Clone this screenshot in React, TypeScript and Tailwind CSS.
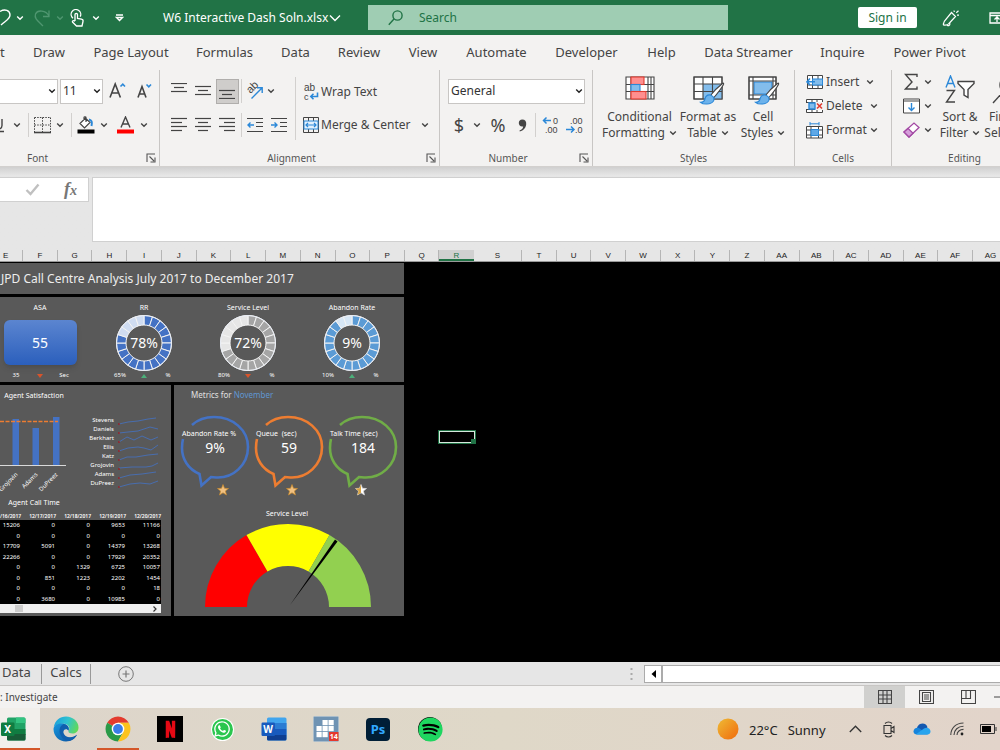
import type { ReactNode } from "react";
import { FaSpotify, FaWhatsapp } from "react-icons/fa";
import { RiNetflixFill } from "react-icons/ri";

const INK = "#444444";
const BLUE = "#2b88d8";

function Chev({ color = INK }: { color?: string }) {
  return (
    <svg width="8" height="6" viewBox="0 0 8 6" fill="none" stroke={color} strokeWidth="1.4" className="shrink-0">
      <path d="M1.2 1.4 L4 4.2 L6.8 1.4" />
    </svg>
  );
}

function IconButton({ label, children, className = "" }: { label: string; children: ReactNode; className?: string }) {
  return (
    <button type="button" aria-label={label} className={"flex items-center justify-center " + className}>
      {children}
    </button>
  );
}

function Rule() {
  return <span className="h-6 w-px justify-self-center bg-[#d2d0ce]" />;
}

function Launcher() {
  return (
    <IconButton label="More settings" className="w-4">
      <svg width="10" height="10" viewBox="0 0 10 10" fill="none" stroke="#555" strokeWidth="1.1">
        <path d="M1 9 V1 H9 M3.5 3.5 L8 8 M9 4.5 V9 H4.5" />
      </svg>
    </IconButton>
  );
}

function Group({ title, width, launcher, children, labelPad = "" }: { title: string; width: string; launcher?: boolean; children: ReactNode; labelPad?: string }) {
  return (
    <section className={"flex shrink-0 flex-col border-r border-[#c8c6c4] " + width}>
      <div className="h-[72px]">{children}</div>
      <div className="mt-2 flex h-4 items-center">
        <span className={"flex-1 text-center text-[10px] leading-4 text-[#555] " + labelPad}>{title}</span>
        {launcher && <Launcher />}
      </div>
    </section>
  );
}

function Combo({ label, value, className }: { label: string; value: string; className: string }) {
  return (
    <span className={"relative flex h-[25px] items-center border border-[#c8c6c4] bg-white " + className}>
      <select aria-label={label} className="h-full w-full appearance-none bg-transparent pl-0.5 text-xs text-[#333]">
        <option>{value}</option>
      </select>
      <span className="pointer-events-none absolute right-[1px]">
        <Chev color="#222" />
      </span>
    </span>
  );
}

function Lines({ rows, y = 2 }: { rows: [number, number][]; y?: number }) {
  return (
    <svg width="16" height="16" viewBox="0 0 16 16" stroke={INK} strokeWidth="1.2">
      {rows.map(([a, b], i) => (
        <line key={i} x1={a} x2={b} y1={y + i * 4 - 0.5} y2={y + i * 4 - 0.5} />
      ))}
    </svg>
  );
}

function Indent({ out }: { out?: boolean }) {
  return (
    <svg width="16" height="16" viewBox="0 0 16 16" fill="none" stroke={INK} strokeWidth="1.2">
      <path d="M0 1.5H16M9 5.5H16M9 9.5H16M0 14.5H16" />
      <path stroke={BLUE} strokeWidth="1.4" d={out ? "M7 8H1M3.5 5.5L1 8L3.5 10.5" : "M0 8H6M3.5 5.5L6 8L3.5 10.5"} />
    </svg>
  );
}

function Brush() {
  return (
    <>
      <path d="M31.5 8.5 C27 12 22 17 19.5 20.5 L22.5 23 C26 19 30 14 32.5 9.5 C33 8 32.3 7.8 31.5 8.5 Z" fill="#fff" stroke={INK} strokeWidth="1.1" />
      <path d="M19.5 20 C16 19.5 14.5 21.5 14 24 C13.5 26 11.5 27.3 9.5 27.3 C12 29.6 20 30 22.5 26 C23.4 24.3 22.8 22.3 21.8 21.4 Z" fill="#6cb2eb" stroke={BLUE} />
    </>
  );
}

function BigButton({ icon, top, bottom, chevron = true }: { icon: ReactNode; top: string; bottom: string; chevron?: boolean }) {
  return (
    <button type="button" className="flex flex-col items-center pt-[5px] text-xs leading-4 whitespace-nowrap text-[#444]">
      <span className="flex h-[34px] justify-center">{icon}</span>
      <span>{top}</span>
      <span className="flex items-center gap-1">
        {bottom}
        {chevron && <Chev />}
      </span>
    </button>
  );
}

const TABS = ["Draw", "Page Layout", "Formulas", "Data", "Review", "View", "Automate", "Developer", "Help", "Data Streamer", "Inquire", "Power Pivot"];

function TitleBar() {
  return (
    <header className="flex h-[35px] items-center bg-[#217346] text-white">
      <div className="grid w-[163px] shrink-0 grid-cols-[12px_16px_28px_8px_26px_12px_34px] items-center justify-items-center">
        <IconButton label="Undo">
          <svg width="12" height="20" viewBox="0 0 12 20" fill="none" stroke="#fff" strokeWidth="1.4">
            <path d="M0 3.5 C5 0.5 10 2.5 10 7 C10 11 6 12.5 1 17" />
          </svg>
        </IconButton>
        <Chev color="#fff" />
        <IconButton label="Redo">
          <svg width="18" height="18" viewBox="0 0 18 18" fill="none" stroke="#4f9670" strokeWidth="1.3">
            <path d="M16 1.5 V7.5 H10 M16 7 C13 1 4.5 0.5 2.5 5 C1 9.5 5 12 10 17" />
          </svg>
        </IconButton>
        <Chev color="#4f9670" />
        <IconButton label="Touch mode">
          <svg width="15" height="18" viewBox="0 0 15 18" fill="none" stroke="#fff" strokeWidth="1.3">
            <path d="M3 9.2 A4.8 4.8 0 1 1 10.2 7.6" />
            <path d="M5 12 V5.5 C5 4 7.5 4 7.5 5.5 V9.5 L11.5 10.2 C13 10.6 13.3 11.3 13 12.5 L12 17 H6.5 L2.5 13 C2 12 3.5 11 5 12.2" />
          </svg>
        </IconButton>
        <Chev color="#fff" />
        <IconButton label="Customize toolbar">
          <svg width="9" height="8" viewBox="0 0 9 8" fill="none" stroke="#fff" strokeWidth="1.3">
            <path d="M1 1H8M1.5 3.5L4.5 6.5L7.5 3.5Z" />
          </svg>
        </IconButton>
      </div>
      <div className="flex w-[205px] shrink-0 items-center gap-px text-xs whitespace-nowrap">
        W6 Interactive Dash Soln.xlsx
        <svg width="12" height="8" viewBox="0 0 12 8" fill="none" stroke="#fff" strokeWidth="1.4">
          <path d="M1 1.5L6 6.5L11 1.5" />
        </svg>
      </div>
      <label className="flex h-[25px] flex-1 items-center gap-4 bg-[#9fcdb3] pl-5">
        <svg width="15" height="16" viewBox="0 0 15 16" fill="none" stroke="#217346" strokeWidth="1.4" className="shrink-0">
          <circle cx="9.5" cy="5.5" r="4.6" />
          <path d="M6.2 8.8L0.8 14.8" />
        </svg>
        <input aria-label="Search" placeholder="Search" className="w-full bg-transparent text-xs text-[#217346] outline-none placeholder:text-[#217346]" />
      </label>
      <div className="flex w-[272px] shrink-0 items-center overflow-hidden pl-[130px]">
        <button type="button" className="h-[21px] w-[59px] shrink-0 rounded-xs bg-white text-xs text-[#217346]">Sign in</button>
        <IconButton label="What's new" className="ml-6 w-5 shrink-0">
          <svg width="18" height="18" viewBox="0 0 18 18" fill="none" stroke="#fff" strokeWidth="1.2">
            <path d="M9.5 3.5 L13.5 7.5 L7 14.5 C5.5 16.5 4 16 1.5 16 C1 15 2 13 2.5 12 Z M5 15.8C5.5 17.3 8.5 17 7.8 14" />
            <path d="M12 1.5L12.3 3M14.3 3.8L16.5 1.8M15 6.2H17" />
          </svg>
        </IconButton>
        <IconButton label="Ribbon display options" className="ml-7 shrink-0">
          <svg width="18" height="12" viewBox="0 0 18 12" fill="none" stroke="#fff" strokeWidth="1.3">
            <path d="M1 1H17V11H1ZM1 3.5H17M8 10V5.5M5.5 7.5L8 5L10.5 7.5" />
          </svg>
        </IconButton>
      </div>
    </header>
  );
}

const L: [number, number][] = [[0, 16], [0, 11], [0, 16], [0, 11]];
const C: [number, number][] = [[0, 16], [3, 13], [0, 16], [3, 13]];
const R: [number, number][] = [[0, 16], [5, 16], [0, 16], [5, 16]];

function FontGroup() {
  return (
    <Group title="Font" width="w-[160px]" launcher labelPad="pr-[68px]">
      <div className="grid h-[42px] grid-cols-[58px_43px_25px_24px] items-center gap-x-[2px]">
        <Combo label="Font" value="" className="border-l-0" />
        <Combo label="Font size" value="11" className="" />
        <IconButton label="Increase font size">
          <svg width="17" height="19" viewBox="0 0 17 19" fill="none" stroke={INK} strokeWidth="1.6">
            <path d="M1 15.5L6.2 2L11.4 15.5M2.8 11H9.6" />
            <path d="M11.5 4.5L13.8 2.2L16 4.5" stroke={BLUE} />
          </svg>
        </IconButton>
        <IconButton label="Decrease font size">
          <svg width="15" height="17" viewBox="0 0 15 17" fill="none" stroke={INK} strokeWidth="1.6">
            <path d="M1 14.5L5 3.5L9 14.5M2.4 11H7.6" />
            <path d="M9.5 1.5L11.8 3.8L14 1.5" stroke={BLUE} />
          </svg>
        </IconButton>
      </div>
      <div className="grid h-[26px] grid-cols-[10px_14px_8px_20px_16px_6px_24px_12px_30px_7px] items-center justify-items-center">
        <IconButton label="Underline" className="justify-self-start">
          <svg width="4" height="16" viewBox="0 0 4 16" fill="none" stroke={INK} strokeWidth="1.4">
            <path d="M2 2V8.5C2 10.5 1.5 11 0 11.8M0 14.5H4" />
          </svg>
        </IconButton>
        <Chev />
        <Rule />
        <IconButton label="Borders">
          <svg width="17" height="17" viewBox="0 0 17 17" fill="none" stroke={INK}>
            <path d="M0.5 0.5H16.5M0.5 0.5V15M16.5 0.5V15M8.5 0.5V15M0.5 8H16.5" strokeDasharray="1.5 1.2" />
            <path d="M0 15.5H17" strokeWidth="1.6" />
          </svg>
        </IconButton>
        <Chev />
        <Rule />
        <IconButton label="Fill colour">
          <svg width="18" height="18" viewBox="0 0 18 18" fill="none" stroke={INK} strokeWidth="1.2">
            <path d="M3 7.5L8.5 2L13 6.5L7.5 12ZM7 4V1.5C7 0.5 9 0.5 9 1.5V6" fill="#fff" />
            <path d="M12 3.5C14.5 4 15.5 6 14.5 10" stroke={BLUE} strokeWidth="2" />
            <rect x="0.5" y="13.5" width="17" height="4" fill="#000" stroke="none" />
          </svg>
        </IconButton>
        <Chev />
        <IconButton label="Font colour">
          <svg width="17" height="18" viewBox="0 0 17 18" fill="none" stroke={INK} strokeWidth="1.4">
            <path d="M4 11.5L8.5 1L13 11.5M5.5 8H11.5" />
            <rect y="13.5" width="17" height="4" fill="#f00" stroke="none" />
          </svg>
        </IconButton>
        <Chev />
      </div>
    </Group>
  );
}

function AlignmentGroup() {
  return (
    <Group title="Alignment" width="w-[280px]" launcher>
      <div className="flex h-full">
        <div className="w-[135px] pl-[7px]">
          <div className="grid h-[42px] grid-cols-[24px_24px_24px_4px_24px_8px] items-center justify-items-center">
            <IconButton label="Top align"><Lines y={1} rows={[[0, 16], [3, 13], [0, 16]]} /></IconButton>
            <IconButton label="Middle align"><Lines y={4} rows={[[0, 16], [3, 13], [0, 16]]} /></IconButton>
            <IconButton label="Bottom align" className="h-[25px] w-[23px] border border-[#b0aeac] bg-[#cfcdcb]">
              <Lines y={8} rows={[[0, 16], [3, 13], [0, 16]]} />
            </IconButton>
            <Rule />
            <IconButton label="Orientation">
              <svg width="20" height="20" viewBox="0 0 20 20" fill="none" stroke={BLUE} strokeWidth="1.4" className="overflow-visible font-['Liberation_Sans',sans-serif]">
                <text transform="translate(5.5 13) rotate(-45)" fontSize="11" fill={INK} stroke="none">ab</text>
                <path d="M6.5 17.5L17 7M12 6.8H17.2V12" />
              </svg>
            </IconButton>
            <Chev />
          </div>
          <div className="grid h-[26px] grid-cols-[24px_24px_24px_4px_24px_24px] items-center justify-items-center">
            <IconButton label="Align left"><Lines rows={L} /></IconButton>
            <IconButton label="Centre"><Lines rows={C} /></IconButton>
            <IconButton label="Align right"><Lines rows={R} /></IconButton>
            <Rule />
            <IconButton label="Decrease indent"><Indent out /></IconButton>
            <IconButton label="Increase indent"><Indent /></IconButton>
          </div>
        </div>
        <div className="mt-[7px] mb-[2px] border-l border-[#d2d0ce] pl-[7px] text-xs whitespace-nowrap text-[#444]">
          <button type="button" className="flex h-[30px] items-center gap-[2px]">
            <svg width="16" height="20" viewBox="0 0 16 20" fill="none" stroke={BLUE} strokeWidth="1.6" className="font-['Liberation_Sans',sans-serif]">
              <text x="1" y="9" fontSize="10" fill={INK} stroke="none">ab</text>
              <text x="1" y="18" fontSize="9" fill={INK} stroke="none">c</text>
              <path d="M14.5 10.5V14.5H8M10.5 11.8L7.8 14.5L10.5 17.2" />
            </svg>
            Wrap Text
          </button>
          <button type="button" className="mt-1 flex h-[28px] items-center gap-[2px]">
            <svg width="16" height="16" viewBox="0 0 16 16" fill="none" stroke={INK}>
              <path d="M0.5 0.5H15.5V15.5H0.5ZM5.5 0.5V4M10.5 0.5V4M5.5 12V15.5M10.5 12V15.5" />
              <rect x="1" y="4" width="14" height="8" fill="#e3f1fc" stroke={BLUE} />
              <path d="M3 8H13M5 6L3 8L5 10M11 6L13 8L11 10" stroke={BLUE} strokeWidth="1.2" />
            </svg>
            Merge &amp; Center
            <span className="pl-2"><Chev /></span>
          </button>
        </div>
      </div>
    </Group>
  );
}

function Decimals({ more }: { more?: boolean }) {
  return (
    <svg width="17" height="20" viewBox="0 0 17 20" fill="none" stroke={BLUE} strokeWidth="1.5" className="font-['Liberation_Sans',sans-serif]">
      <g fill={INK} stroke="none" fontSize="9">
        <text x={more ? 11 : 4} y="9">{more ? "0" : ".00"}</text>
        <text x={more ? 3 : 9} y="18">{more ? ".00" : ".0"}</text>
      </g>
      <path d={more ? "M9 5.5H1.5M4.5 2.5L1.5 5.5L4.5 8.5" : "M0 14.5H8M5 11.5L8 14.5L5 17.5"} />
    </svg>
  );
}

function NumberGroup() {
  return (
    <Group title="Number" width="w-[153px]" launcher>
      <div className="flex h-[42px] items-center pr-[7px] pl-2">
        <Combo label="Number format" value="General" className="w-full" />
      </div>
      <div className="grid h-[26px] grid-cols-[22px_14px_28px_20px_6px_24px_24px] items-center justify-items-center pl-2 text-[#444]">
        <button type="button" className="text-lg leading-5">$</button>
        <Chev />
        <button type="button" className="text-lg leading-5">%</button>
        <IconButton label="Comma style">
          <svg width="9" height="13" viewBox="0 0 9 13" fill={INK}>
            <path d="M4.2 0.5C7 0.5 8.5 2.4 8.2 5.2C7.9 8.8 5.5 11.5 1.8 12.5L1.5 11.6C3.8 10.6 5 9.2 5.2 7.4C2.5 8 0.8 6.2 0.8 4C0.8 2 2.2 0.5 4.2 0.5Z" />
          </svg>
        </IconButton>
        <Rule />
        <IconButton label="Increase decimal"><Decimals more /></IconButton>
        <IconButton label="Decrease decimal"><Decimals /></IconButton>
      </div>
    </Group>
  );
}

function StylesGroup() {
  return (
    <Group title="Styles" width="w-[202px]">
      <div className="grid grid-cols-[73px_64px_46px] pl-[10px]">
        <BigButton
          top="Conditional"
          bottom="Formatting"
          icon={
            <svg width="30" height="26" viewBox="0 0 30 26" fill="none" stroke={INK} strokeWidth="1.1">
              <path d="M1 2H29V24H1ZM1 9.5H29M1 16.5H29M6 2V24M23 2V24M26 2V24" fill="#fff" />
              <rect x="6" y="2" width="13" height="7.5" fill="#ff8f8f" stroke="#e03c31" />
              <rect x="6" y="9.5" width="9" height="7" fill="#83bdec" stroke={BLUE} />
              <rect x="6" y="16.5" width="15" height="7.5" fill="#ff8f8f" stroke="#e03c31" />
            </svg>
          }
        />
        <BigButton
          top="Format as"
          bottom="Table"
          icon={
            <svg width="34" height="31" viewBox="0 0 34 31" fill="none" stroke={INK} strokeWidth="1.1">
              <path d="M3 2H31V24H3Z" fill="#fff" />
              <path d="M12 9H31V24H12Z" fill="#83bdec" stroke="none" />
              <path d="M3 2H31V24H3ZM3 9H31M3 16.5H31M12 2V24M21.5 2V24" />
              <Brush />
            </svg>
          }
        />
        <BigButton
          top="Cell"
          bottom="Styles"
          icon={
            <svg width="34" height="31" viewBox="0 0 34 31" fill="none" stroke={INK} strokeWidth="1.1">
              <path d="M3 2H30V24H3Z" fill="#fff" />
              <path d="M8 7H26V19H8Z" fill="#83bdec" stroke={BLUE} />
              <path d="M3 2H30V24H3ZM3 6H30M3 20H30M7 2V24M27 2V24" />
              <Brush />
            </svg>
          }
        />
      </div>
    </Group>
  );
}

function CellIcon({ kind }: { kind: string }) {
  return (
    <svg width="17" height="17" viewBox="0 0 17 17" fill="none" stroke={INK}>
      {kind === "Insert" && (
        <>
          <path d="M1.5 1.5H16.5V14.5H1.5ZM6.5 1.5V14.5M12 1.5V14.5M1.5 11H16.5" fill="#fff" />
          <rect x="6.5" y="5" width="10" height="6" fill="#83bdec" stroke={BLUE} />
          <path d="M9 7.8H1M4 4.5L1 7.8L4 11" stroke={BLUE} strokeWidth="1.6" />
        </>
      )}
      {kind === "Delete" && (
        <>
          <path d="M0.5 4V1.5H16.5V4M0.5 12V14.5H16.5V12M6 1.5V4M11 1.5V4M6 12V14.5M11 12V14.5M0 4.5H9M0 11.5H9" fill="#fff" />
          <path d="M3 5H9V11H3Z" fill="#83bdec" stroke={BLUE} strokeWidth="1.4" />
          <path d="M11 5.5L16 10.5M16 5.5L11 10.5" stroke="#e03c31" strokeWidth="1.6" />
        </>
      )}
      {kind === "Format" && (
        <>
          <path d="M0.5 4.5H16.5V16H0.5ZM0.5 8H16.5M0.5 13H16.5M5 4.5V16M12.5 4.5V16" fill="#fff" />
          <rect x="5" y="7.5" width="7.5" height="6" fill="#5fa8e6" stroke={BLUE} />
          <path d="M4 0V3.5M13 0V3.5M4 1.8H13" stroke={BLUE} />
        </>
      )}
    </svg>
  );
}

function CellsGroup() {
  return (
    <Group title="Cells" width="w-[97px]">
      <div className="flex flex-col pl-[11px]">
        {["Insert", "Delete", "Format"].map((k) => (
          <button key={k} type="button" className="flex h-6 items-center gap-[3px] text-xs text-[#444]">
            <CellIcon kind={k} />
            {k}
            <span className={k === "Format" ? "" : "pl-1"}><Chev /></span>
          </button>
        ))}
      </div>
    </Group>
  );
}

function EditingGroup() {
  return (
    <Group title="Editing" width="w-[146px]">
      <div className="grid grid-cols-[20px_14px_50px_44px] pl-[9px]">
        <div className="grid">
          <IconButton label="AutoSum" className="h-6">
            <svg width="14" height="18" viewBox="0 0 14 18" fill="none" stroke={INK} strokeWidth="1.4">
              <path d="M13 4V1.5H1.5L8 9L1.5 16H13V13.5" />
            </svg>
          </IconButton>
          <IconButton label="Fill" className="h-6">
            <svg width="17" height="16" viewBox="0 0 17 16" fill="none" stroke={INK}>
              <path d="M0.5 1H16.5V15H0.5ZM0.5 3H16.5" fill="#fff" />
              <path d="M8.5 5V12.5M5.5 9.5L8.5 12.5L11.5 9.5" stroke={BLUE} strokeWidth="1.4" />
            </svg>
          </IconButton>
          <IconButton label="Clear" className="h-6">
            <svg width="17" height="16" viewBox="0 0 17 16" fill="#fff" stroke="#a349a4" strokeWidth="1.3">
              <path d="M1 10L11 1L16 5.5L6 15Z" />
              <path d="M1 10L5 6.4L10 11.2L6 15Z" fill="#d59fda" />
            </svg>
          </IconButton>
        </div>
        <div className="grid h-[72px] items-center justify-items-center">
          <Chev />
          <Chev />
          <Chev />
        </div>
        <BigButton
          top="Sort &"
          bottom="Filter"
          icon={
            <svg width="30" height="30" viewBox="0 0 30 30" fill="none" stroke={INK} strokeWidth="1.4">
              <path d="M1 12.5L5.5 1L10 12.5M2.6 8.5H8.4" stroke={BLUE} />
              <path d="M1.5 15.5H9.5L1.5 27H10" />
              <path d="M13 6.5H29V8.5L23 14.5V22.5L19 20V14.5L13 8.5Z" fill="#fff" />
            </svg>
          }
        />
        <BigButton
          top="Find &"
          bottom="Select"
          icon={
            <svg width="30" height="30" viewBox="0 0 30 30" fill="none" stroke={INK} strokeWidth="1.4">
              <circle cx="17" cy="10" r="9" />
              <path d="M11 17L1 28" />
            </svg>
          }
        />
      </div>
    </Group>
  );
}

function Ribbon() {
  return (
    <div className="overflow-hidden border-b border-[#d2d0ce] bg-[#f3f2f1]">
      <nav className="grid h-[35px] grid-cols-[18px_62px_102px_85px_57px_70px_58px_89px_91px_59px_115px_73px_101px] items-center text-center text-[13px] whitespace-nowrap text-[#444]">
        <button type="button" className="flex justify-self-start">t</button>
        {TABS.map((t) => (
          <button key={t} type="button">{t}</button>
        ))}
      </nav>
      <div className="flex h-24">
        <FontGroup />
        <AlignmentGroup />
        <NumberGroup />
        <StylesGroup />
        <CellsGroup />
        <EditingGroup />
      </div>
    </div>
  );
}

function FormulaBar() {
  return (
    <div className="flex h-[83px] items-start gap-[3px] bg-linear-to-b from-[#d0d0d0] to-[#e6e6e6] to-10% pt-2.5">
      <div className="flex h-[25px] w-[89px] shrink-0 items-center border border-l-0 border-[#d0d0d0] bg-white">
        <IconButton label="Enter" className="ml-[25px]">
          <svg width="15" height="13" viewBox="0 0 15 13" fill="none" stroke="#c0c0c0" strokeWidth="2.4">
            <path d="M1.5 7L5.5 11L13.5 1.5" />
          </svg>
        </IconButton>
        <button type="button" className="ml-6 font-['Liberation_Serif',serif] text-lg leading-5 font-bold text-[#777] italic">
          f<span className="text-sm">x</span>
        </button>
      </div>
      <textarea aria-label="Formula" className="h-[65px] flex-1 resize-none border border-r-0 border-[#d0d0d0] bg-white outline-none" />
    </div>
  );
}

const LEFT_COLS = ["F", "G", "H", "I", "J", "K", "L", "M", "N", "O", "P"];
const RIGHT_COLS = ["T", "U", "V", "W", "X", "Y", "Z", "AA", "AB", "AC", "AD", "AE", "AF"];

function ColumnHeads() {
  const cell = "border-r border-[#b5b5b5] text-center";
  return (
    <div className="flex h-[12px] overflow-hidden border-b border-[#999] bg-[#e6e6e6] font-['Liberation_Sans',sans-serif] text-[8px] leading-3 text-[#222]">
      <span className="w-[23px] shrink-0 border-r border-[#b5b5b5] pl-[3px]">E</span>
      <div className="grid w-[382px] shrink-0 grid-cols-11">
        {LEFT_COLS.map((c) => <span key={c} className={cell}>{c}</span>)}
      </div>
      <span className="w-[34px] shrink-0 border-r border-[#b5b5b5] text-center">Q</span>
      <span className="w-[35px] shrink-0 border-b-2 border-[#217346] bg-[#d0d0d0] text-center text-[#217346]">R</span>
      <span className="w-[48px] shrink-0 border-r border-[#b5b5b5] text-center">S</span>
      <div className="grid w-[451px] shrink-0 grid-cols-13">
        {RIGHT_COLS.map((c) => <span key={c} className={cell}>{c}</span>)}
      </div>
      <span className="w-[35px] shrink-0 text-center">AG</span>
    </div>
  );
}

function polar(cx: number, cy: number, r: number, deg: number): string {
  const a = ((deg - 90) * Math.PI) / 180;
  return (cx + r * Math.cos(a)).toFixed(2) + " " + (cy + r * Math.sin(a)).toFixed(2);
}

function sector(cx: number, cy: number, ro: number, ri: number, from: number, to: number): string {
  return `M${polar(cx, cy, ro, from)}A${ro} ${ro} 0 0 1 ${polar(cx, cy, ro, to)}L${polar(cx, cy, ri, to)}A${ri} ${ri} 0 0 0 ${polar(cx, cy, ri, from)}Z`;
}

function Ring({ filled, color, light }: { filled: number; color: string; light: string }) {
  return (
    <svg width="58" height="58" viewBox="0 0 58 58" className="col-start-1 row-start-1">
      {Array.from({ length: 20 }, (_, i) => (
        <path key={i} d={sector(29, 29, 27.5, 18, i * 18, i * 18 + 18)} fill={i < filled ? color : light} stroke="#f4f4f4" strokeWidth="1" />
      ))}
      <circle cx="29" cy="29" r="27.5" fill="none" stroke="#e8ecf4" />
    </svg>
  );
}

function Kpi({ title, target, unit, up, children }: { title: string; target: string; unit: string; up?: boolean; children: ReactNode }) {
  return (
    <div className="flex flex-col items-center">
      <span className="pt-[5px] text-[7px] leading-3">{title}</span>
      <div className="grid h-[57px] place-items-center text-sm">{children}</div>
      <div className="grid h-[9px] grid-cols-[22px_26px_22px] place-items-center text-[6px] leading-[9px]">
        <span>{target}</span>
        <svg width="6" height="4" viewBox="0 0 6 4" fill={up ? "#4caf7a" : "#d9542b"}>
          <path d={up ? "M0 4L3 0L6 4Z" : "M0 0L3 4L6 0Z"} />
        </svg>
        <span>{unit}</span>
      </div>
    </div>
  );
}

const AGENTS: [string, string][] = [
  ["Stevens", "M1 7L10 5L20 4L30 2L38 1"],
  ["Daniels", "M1 7L10 6L20 5L32 1L40 3"],
  ["Berkhart", "M1 7L9 2L16 5L24 1L33 5L40 2"],
  ["Ellis", "M1 7L10 4L20 3L26 4L33 6L40 1"],
  ["Katz", "M1 7L9 4L18 4L30 2L40 1"],
  ["Grojovin", "M1 6L14 5L28 5L34 4L40 1"],
  ["Adams", "M1 7L12 4L24 3L38 1"],
  ["DuPreez", "M1 7L12 4L22 3L32 4L40 1"],
];

const DATES = ["/16/2017", "12/17/2017", "12/18/2017", "12/19/2017", "12/20/2017"];
const CALLS = [
  [15206, 0, 0, 9653, 11166],
  [0, 0, 0, 0, 0],
  [17709, 5091, 0, 14379, 13268],
  [22266, 0, 0, 17929, 20352],
  [0, 0, 1329, 6725, 10057],
  [0, 851, 1223, 2202, 1454],
  [0, 0, 0, 0, 18],
  [0, 3680, 0, 10985, 0],
];

function AgentPanel() {
  return (
    <section className="w-[171px] bg-[#595959] text-white">
      <h2 className="w-[68px] pt-[5px] text-center text-[7px] leading-3 whitespace-nowrap">Agent Satisfaction</h2>
      <div className="flex h-[94px] pt-3.5">
        <svg width="80" height="80" viewBox="0 0 80 80">
          <g fill="#4472c4">
            <rect x="12.5" y="3" width="6.5" height="46" />
            <rect x="32.5" y="12" width="6.5" height="37" />
            <rect x="53" y="1" width="6.5" height="48" />
          </g>
          <path d="M0 49.5H66" stroke="#d9d9d9" />
          <path d="M0 5.5H58" stroke="#ed7d31" strokeWidth="1.3" strokeDasharray="4 1.5" />
          <g fill="#fff" fontSize="6" textAnchor="end">
            <text transform="translate(18 59) rotate(-45)">Grojovin</text>
            <text transform="translate(38 59) rotate(-45)">Adams</text>
            <text transform="translate(58 59) rotate(-45)">DuPreez</text>
          </g>
        </svg>
        <ul className="w-[79px] text-[6px] leading-[9px]">
          {AGENTS.map(([name, d]) => (
            <li key={name} className="flex h-[9px] items-center justify-end gap-[4px]">
              {name}
              <svg width="41" height="8" viewBox="0 0 41 8" fill="none" className="shrink-0">
                <path d={d} stroke="#4472c4" strokeWidth="0.8" />
                <circle cx="1" cy="7" r="0.8" fill="#c00000" />
              </svg>
            </li>
          ))}
        </ul>
      </div>
      <h2 className="w-[68px] text-center text-[7px] leading-[14px] whitespace-nowrap">Agent Call Time</h2>
      <table className="mt-[2px] h-[92px] w-[161px] table-fixed border-collapse text-right leading-[8px]">
        <colgroup>
          <col className="w-[21px]" />
          <col className="w-[35px]" />
          <col className="w-[35px]" />
          <col className="w-[35px]" />
          <col className="w-[35px]" />
        </colgroup>
        <thead>
          <tr className="h-2">
            {DATES.map((d) => <th key={d} className="p-0 text-[5px] font-semibold">{d}</th>)}
          </tr>
        </thead>
        <tbody className="bg-black">
          {CALLS.map((row, i) => (
            <tr key={i}>
              {row.map((v, j) => <td key={j} className="p-0 pr-px text-[6px]">{v}</td>)}
            </tr>
          ))}
        </tbody>
      </table>
      <div className="flex h-[9px] w-[161px] items-center bg-[#f0f0f0] pr-1 pl-[15px]">
        <span className="h-[7px] w-2 bg-[#cdcdcd]" />
        <svg width="4" height="6" viewBox="0 0 4 6" fill="none" stroke="#333" strokeWidth="1.2" className="ml-auto">
          <path d="M0.5 0.5L3 3L0.5 5.5" />
        </svg>
      </div>
    </section>
  );
}

function Bubble({ label, value, color }: { label: string; value: string; color: string }) {
  return (
    <div className="grid w-[70px]">
      <svg width="70" height="74" viewBox="0 0 70 74" fill="none" stroke={color} strokeWidth="2.6" className="col-start-1 row-start-1">
        <path d="M12 10C18 4.5 26 2 34 2C53 2 68 15 68 32C68 50 53 63.5 36 62.5L31 62L21.5 70.5L19.5 59C8 54 2 44 2 33Q2 28 3 24" />
      </svg>
      <div className="col-start-1 row-start-1 pt-[13px]">
        <div className="pl-0.5 text-[7px] leading-3 whitespace-pre">{label}</div>
        <div className="text-center text-sm leading-4">{value}</div>
      </div>
    </div>
  );
}

function Star({ half }: { half?: boolean }) {
  return (
    <svg width="12" height="12" viewBox="0 0 12 12">
      <path d="M6 0.5L7.5 4.3L11.5 4.5L8.4 7L9.5 11L6 8.8L2.5 11L3.6 7L0.5 4.5L4.5 4.3Z" fill={half ? "#fff" : "#f0c080"} stroke={half ? "#d8d8d8" : "#c98a2b"} strokeWidth="0.7" />
      {half && <path d="M6 0.5V8.8L2.5 11L3.6 7L0.5 4.5L4.5 4.3Z" fill="#d9a441" />}
    </svg>
  );
}

function MetricsPanel() {
  return (
    <section className="w-[230px] bg-[#595959] pr-1 text-white">
      <h2 className="pt-1 pl-[17px] text-[8px] leading-3 text-[#e0e0e0]">
        Metrics for <span className="text-[#6096d0]">November</span>
      </h2>
      <div className="flex gap-1 pt-3.5 pl-1.5">
        <Bubble label="Abandon Rate %" value="9%" color="#4472c4" />
        <Bubble label="Queue  (sec)" value="59" color="#ed7d31" />
        <Bubble label="Talk Time (sec)" value="184" color="#70ad47" />
      </div>
      <div className="-mt-[5px] grid w-[221px] grid-cols-3 justify-items-center pl-[14px]">
        <Star />
        <Star />
        <Star half />
      </div>
      <h2 className="pt-2.5 text-center text-[7px] leading-4">Service Level</h2>
      <svg width="170" height="84" viewBox="0 0 170 84" className="mx-auto mt-0.5">
        <path d={sector(86, 83, 83, 41, -90, -30)} fill="#f00" />
        <path d={sector(86, 83, 83, 41, -30, 30)} fill="#ff0" />
        <path d={sector(86, 83, 83, 41, 30, 90)} fill="#92d050" />
        <path d="M88 81L133 15.5L135.5 17.5Z" fill="#000" />
      </svg>
    </section>
  );
}

function Dashboard() {
  return (
    <div className="flex w-[404px] flex-col gap-[3px] pt-px">
      <h1 className="h-[31px] bg-[#595959] pl-px text-xs leading-[31px] whitespace-nowrap text-[#eee]">
        JPD Call Centre Analysis July 2017 to December 2017
      </h1>
      <section className="h-[85px] overflow-hidden bg-[#595959] text-white">
        <div className="-ml-3 grid w-[416px] grid-cols-4">
          <Kpi title="ASA" target="35" unit="Sec">
            <span className="grid h-[45px] w-[73px] place-items-center rounded-md bg-linear-to-b from-[#5b85d0] to-[#2b5fbc] shadow-md">55</span>
          </Kpi>
          <Kpi title="RR" target="65%" unit="%" up>
            <Ring filled={16} color="#4472c4" light="#cfdcf1" />
            <span className="col-start-1 row-start-1">78%</span>
          </Kpi>
          <Kpi title="Service Level" target="80%" unit="%">
            <Ring filled={14} color="#a5a5a5" light="#e6e6e6" />
            <span className="col-start-1 row-start-1">72%</span>
          </Kpi>
          <Kpi title="Abandon Rate" target="10%" unit="%" up>
            <Ring filled={18} color="#5b9bd5" light="#d6e6f5" />
            <span className="col-start-1 row-start-1">9%</span>
          </Kpi>
        </div>
      </section>
      <div className="flex h-[231px] gap-[3px]">
        <AgentPanel />
        <MetricsPanel />
      </div>
    </div>
  );
}

function SheetTabs() {
  return (
    <div className="flex h-6 items-center border-b border-[#c8c6c4] bg-[#e6e6e6] text-[13px] text-[#444]">
      <button type="button" className="h-[20px] w-[42px] border-r border-[#999] pb-[3px] pl-0.5 text-left leading-4">Data</button>
      <button type="button" className="h-[20px] w-[49px] border-r border-[#999] pb-[3px] text-center leading-4">Calcs</button>
      <IconButton label="New sheet" className="ml-[27px]">
        <svg width="16" height="16" viewBox="0 0 16 16" fill="none" stroke="#777">
          <circle cx="8" cy="8" r="7.3" />
          <path d="M8 4.5V11.5M4.5 8H11.5" strokeWidth="1.2" />
        </svg>
      </IconButton>
      <div className="ml-auto flex w-[370px] items-center">
        <svg width="3" height="12" viewBox="0 0 3 12" fill="#aaa">
          <path d="M0.5 0H2.5V2H0.5ZM0.5 5H2.5V7H0.5ZM0.5 10H2.5V12H0.5Z" />
        </svg>
        <IconButton label="Scroll left" className="ml-[11px] h-[18px] w-[18px] border border-[#ababab] bg-white">
          <svg width="5" height="8" viewBox="0 0 5 8"><path d="M5 0V8L0.5 4Z" /></svg>
        </IconButton>
        <span className="h-[18px] flex-1 border border-r-0 border-[#ababab] bg-white" />
      </div>
    </div>
  );
}

function StatusBar() {
  return (
    <div className="flex h-[22px] items-center justify-between overflow-hidden bg-[#f3f2f1] text-[10px] text-[#444]">
      <span>: Investigate</span>
      <div className="flex h-full w-[136px] items-center">
        <IconButton label="Normal view" className="h-full w-[41px] shrink-0 bg-[#d0d0ce]">
          <svg width="14" height="14" viewBox="0 0 14 14" fill="none" stroke={INK} strokeWidth="1.1">
            <path d="M0.5 0.5H13.5V13.5H0.5ZM0.5 5H13.5M0.5 9H13.5M5 0.5V13.5M9 0.5V13.5" />
          </svg>
        </IconButton>
        <IconButton label="Page layout view" className="w-[42px] shrink-0">
          <svg width="15" height="14" viewBox="0 0 15 14" fill="none" stroke={INK} strokeWidth="1.1">
            <path d="M0.5 0.5H14.5V13.5H0.5ZM3.5 2.5H11.5V11.5H3.5ZM5 5H10M5 7H10M5 9H10" />
          </svg>
        </IconButton>
        <IconButton label="Page break preview" className="w-[42px] shrink-0">
          <svg width="15" height="14" viewBox="0 0 15 14" fill="none" stroke={INK} strokeWidth="1.1">
            <path d="M0.5 0.5H14.5V13.5H0.5ZM0.5 8.5H9.5V0.5M5 0.5V8.5" />
          </svg>
        </IconButton>
        <IconButton label="Zoom out" className="ml-[5px]">
          <svg width="8" height="2" viewBox="0 0 8 2"><path d="M0 1H8" stroke={INK} /></svg>
        </IconButton>
      </div>
    </div>
  );
}

function OfficeLogo({ letter, c }: { letter: string; c: [string, string, string, string, string] }) {
  return (
    <svg width="26" height="24" viewBox="0 0 26 24">
      <rect x="6" y="0.5" width="19.5" height="23" rx="1.5" fill={c[0]} />
      <path d="M6 6H25.5V12H6Z" fill={c[1]} />
      <path d="M6 12H25.5V18H6Z" fill={c[2]} />
      <path d="M6 18H25.5V22A1.5 1.5 0 0 1 24 23.5H7.5A1.5 1.5 0 0 1 6 22Z" fill={c[3]} />
      <rect x="0.5" y="5.5" width="13.5" height="13.5" rx="1.2" fill={c[4]} />
      <text x="7.2" y="16" fontSize="10" fontWeight="700" textAnchor="middle" fill="#fff">{letter}</text>
    </svg>
  );
}

function ExcelLogo() {
  return (
    <svg width="26" height="24" viewBox="0 0 26 24">
      <rect x="7" y="0.5" width="18.5" height="23" rx="1.5" fill="#21a366" />
      <path d="M16 0.5H24A1.5 1.5 0 0 1 25.5 2V6H16Z" fill="#33c481" />
      <path d="M7 12H16V18H7Z" fill="#107c41" />
      <path d="M16 12H25.5V18H16Z" fill="#107c41" />
      <path d="M7 17H25.5V22A1.5 1.5 0 0 1 24 23.5H8.5A1.5 1.5 0 0 1 7 22Z" fill="#185c37" />
      <rect x="1" y="5.5" width="13.5" height="13.5" rx="1.2" fill="#107c41" />
      <text x="7.7" y="16" fontSize="10" fontWeight="700" textAnchor="middle" fill="#fff">X</text>
    </svg>
  );
}

function EdgeLogo() {
  return (
    <svg width="26" height="26" viewBox="0 0 26 26">
      <defs>
        <linearGradient id="edge-top" x1="0" y1="0.3" x2="1" y2="0.6">
          <stop offset="0" stopColor="#1ba0dc" />
          <stop offset="0.5" stopColor="#2fc3d0" />
          <stop offset="1" stopColor="#62d957" />
        </linearGradient>
        <linearGradient id="edge-low" x1="0" y1="0" x2="1" y2="1">
          <stop offset="0" stopColor="#1698e0" />
          <stop offset="1" stopColor="#0c4f9c" />
        </linearGradient>
      </defs>
      <path d="M0.8 11C2 4.5 7 0.5 13 0.5C20 0.5 25.5 5.5 25.5 11.5C25.5 15.5 22.5 17.5 19.5 17.5C16.5 17.5 15 16.5 15.5 15.3C17.5 12.5 16 8.5 11.5 7.8C7 7.2 3 8.5 0.8 11Z" fill="url(#edge-top)" />
      <path d="M0.5 13C0.8 9 5.5 6.8 10 7.6C14.5 8.5 16.6 11.5 15.4 14.8C14.6 12.6 11 12.6 10.2 15.5C9.4 19.5 14 22.5 19 21.4C21 21 22.5 20 24 18.8C21.8 23 17.8 25.5 13 25.5C6 25.5 0.5 20 0.5 13Z" fill="url(#edge-low)" />
      <path d="M10.5 8C6.5 10 5.5 15 7.5 19C9.3 22.5 12.5 25 16 25C20 24.3 22.7 21.7 24 18.8C21 21.5 15 22.5 11.8 19.3C9.8 17 9.8 14.5 11.5 13.2C13.2 12.2 15 13 15.4 14.8C16.6 11.5 14.5 8.5 10.5 8Z" fill="#105fae" />
    </svg>
  );
}

function ChromeLogo() {
  return (
    <svg width="26" height="26" viewBox="0 0 26 26">
      <path d="M13 13L2.2 6.75A12.5 12.5 0 0 1 23.8 6.75H13Z" fill="#e33b2e" />
      <path d="M13 13L2.2 6.75A12.5 12.5 0 0 0 13 25.5L18.4 16.1Z" fill="#2a9a48" />
      <path d="M13 6.75H23.8A12.5 12.5 0 0 1 13 25.5L18.4 16.1Z" fill="#fcc31e" />
      <circle cx="13" cy="13" r="6.3" fill="#fff" />
      <circle cx="13" cy="13" r="4.9" fill="#3a7de8" />
    </svg>
  );
}

function Calendar() {
  return (
    <svg width="26" height="26" viewBox="0 0 26 26">
      <rect x="0.5" y="0.5" width="25" height="25" rx="1" fill="#6f93b3" stroke="#a9bccb" />
      <g fill="#fff">
        {[[9, 4], [15, 4], [3, 10], [9, 10], [15, 10], [3, 16], [9, 16]].map(([x, y]) => (
          <rect key={x + "-" + y} x={x + 0.5} y={y} width="5.2" height="5.2" />
        ))}
      </g>
      <rect x="16" y="16" width="9.5" height="9" fill="#e5392d" />
      <text x="20.7" y="23" fontSize="7" fontWeight="700" textAnchor="middle" fill="#fff">14</text>
    </svg>
  );
}

function Taskbar() {
  const apps: [string, ReactNode][] = [
    ["Edge", <EdgeLogo />],
    ["Chrome", <ChromeLogo />],
    ["Netflix", <span className="grid h-[26px] w-[26px] place-items-center bg-black"><RiNetflixFill size={19} color="#e50914" /></span>],
    ["WhatsApp", <span className="grid h-[21px] w-[21px] place-items-center rounded-full bg-[#2bc64f] ring-1 ring-white"><FaWhatsapp size={18} color="#fff" /></span>],
    ["Word", <OfficeLogo letter="W" c={["#41a5ee", "#2b7cd3", "#185abd", "#103f91", "#185abd"]} />],
    ["Calendar", <Calendar />],
    ["Photoshop", <span className="grid h-[23px] w-6 place-items-center rounded-[4px] bg-[#001e36] text-[13px] leading-none font-bold text-[#31a8ff]">Ps</span>],
    ["Spotify", <span className="grid h-6 w-6 place-items-center rounded-full bg-black"><FaSpotify size={25} color="#1ed760" className="shrink-0" /></span>],
  ];
  return (
    <footer className="flex h-[42px] items-stretch justify-between overflow-hidden bg-linear-to-r from-[#ddd5cb] via-[#dfd8c8] to-[#e2d4ca]">
      <div className="flex">
        <button type="button" aria-label="Excel" className="flex w-10 items-center border-b-2 border-[#d4572a] bg-[#f2efeb] pt-0.5">
          <ExcelLogo />
        </button>
        {apps.map(([name, icon]) => (
          <button key={name} type="button" aria-label={name} className="flex w-[52px] flex-col items-center justify-between">
            <span className="flex h-10 items-center pt-0.5">{icon}</span>
            <span className={name === "Chrome" ? "h-[2px] w-[42px] bg-[#d4572a]" : "h-[2px]"} />
          </button>
        ))}
      </div>
      <div className="flex w-[283px] shrink-0 items-center text-[13px] text-[#222]">
        <svg width="22" height="22" viewBox="0 0 22 22">
          <defs>
            <linearGradient id="sun" x1="0" y1="0" x2="1" y2="1">
              <stop offset="0.2" stopColor="#efab2d" />
              <stop offset="0.8" stopColor="#f07a14" />
            </linearGradient>
          </defs>
          <circle cx="11" cy="11" r="10.5" fill="url(#sun)" />
        </svg>
        <span className="ml-2.5 flex gap-2.5 pt-1 whitespace-nowrap"><span>22°C</span><span>Sunny</span></span>
        <div className="ml-auto grid w-[162px] shrink-0 grid-cols-[34px_34px_32px_38px_24px] items-center justify-items-center">
          <IconButton label="Hidden icons">
            <svg width="13" height="8" viewBox="0 0 13 8" fill="none" stroke="#333" strokeWidth="1.3"><path d="M0.8 7L6.5 1.2L12.2 7" /></svg>
          </IconButton>
          <svg width="12" height="17" viewBox="0 0 12 17" fill="none" stroke="#333" strokeWidth="1.1">
            <path d="M1 4.5H8V12.5H1ZM8 7.5L11 5.5V11.5L8 9.5M2 2.5C4 0.5 7 0.5 9 2.5M2 14.5C4 16.5 7 16.5 9 14.5" />
          </svg>
          <svg width="18" height="12" viewBox="0 0 18 12">
            <path d="M4 8C3 4 6 0.5 9.5 0.5C12 0.5 14 2 14.5 4.5L9 9Z" fill="#1458b0" />
            <path d="M0.5 8.5C0.5 5.5 3.5 4 6 5L15 11.5H4C2 11.5 0.5 10.5 0.5 8.5Z" fill="#1684dc" />
            <path d="M3 11.2L11 5.5C14 3.8 17.5 5.5 17.5 8.5C17.5 10.5 16 11.5 14.5 11.5H4Z" fill="#28a4ee" />
          </svg>
          <svg width="14" height="14" viewBox="0 0 14 14" fill="none" stroke="#444" strokeWidth="1.1">
            <path d="M0.8 13C0.8 6 6 1 13.5 1M4 13C4 8 8 4.2 13.5 4.2M7 13C7 9.8 9.8 7.4 13.5 7.4" />
            <circle cx="12" cy="12" r="1.4" fill="#222" stroke="none" />
          </svg>
          <svg width="17" height="10" viewBox="0 0 17 10" fill="none" stroke="#333">
            <path d="M0.5 0.5H14.5V9.5H0.5ZM16 3V7" />
            <rect x="2" y="2" width="9" height="6" fill="#000" stroke="none" />
          </svg>
        </div>
      </div>
    </footer>
  );
}

export default function App() {
  return (
    <div className="flex min-h-screen flex-col overflow-hidden bg-[#e6e6e6] font-['Noto_Sans','Open_Sans',sans-serif]">
      <TitleBar />
      <Ribbon />
      <FormulaBar />
      <ColumnHeads />
      <main className="relative flex-1 bg-black">
        <Dashboard />
        <div className="absolute top-[169px] left-[439px] h-[12px] w-[36px] border border-[#d5e8dc] outline-1 outline-[#217346]">
          <span className="absolute -right-[2px] -bottom-[2px] h-[5px] w-[5px] bg-[#217346]" />
        </div>
      </main>
      <SheetTabs />
      <StatusBar />
      <Taskbar />
    </div>
  );
}
